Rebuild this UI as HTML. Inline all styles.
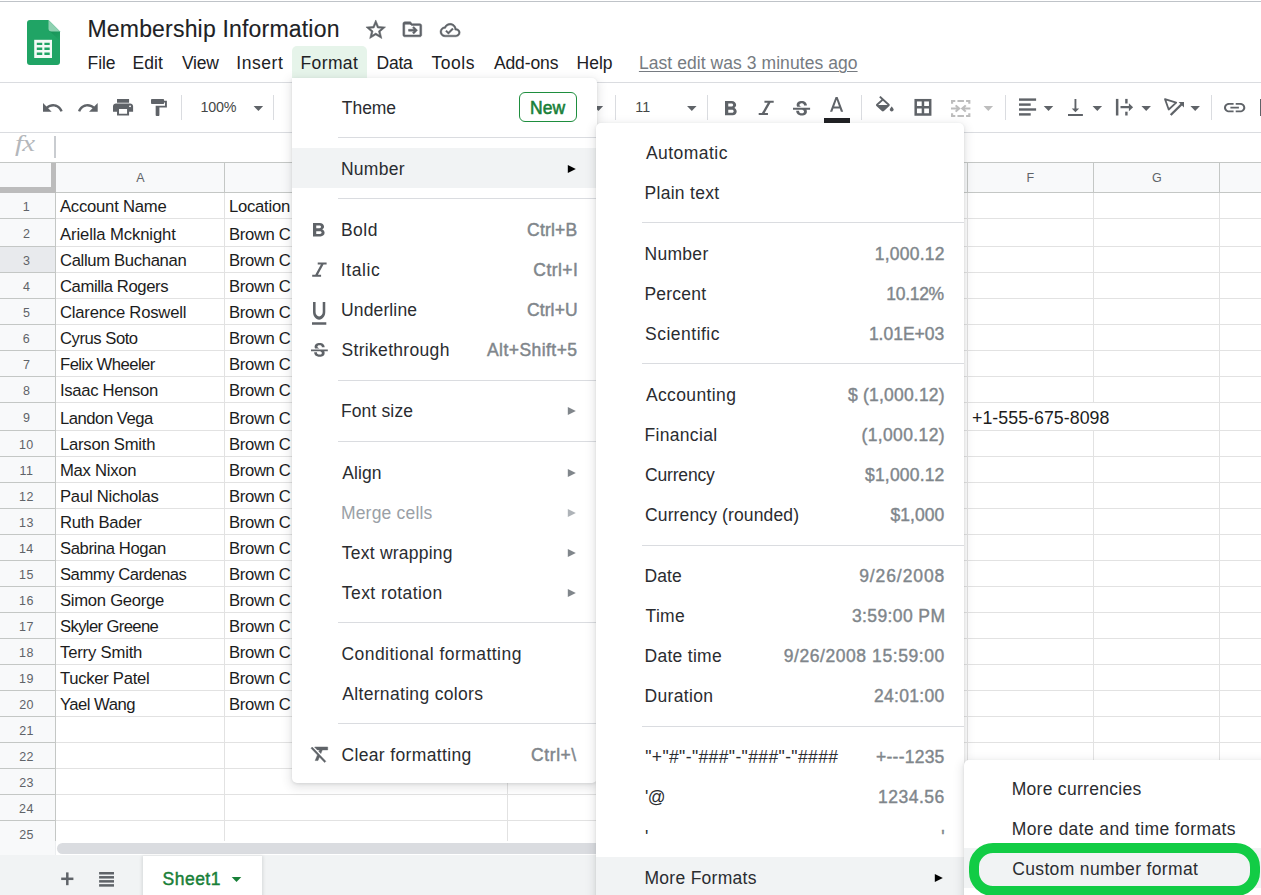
<!DOCTYPE html>
<html lang="en"><head><meta charset="utf-8"><title>Membership Information - Google Sheets</title>
<style>
html,body{margin:0;padding:0}
body{width:1261px;height:895px;overflow:hidden;background:#fff;position:relative;font-family:"Liberation Sans",sans-serif;color:#202124}
.abs,.t,.ic,.ln{position:absolute}
.t{white-space:nowrap;line-height:24px;height:24px}
.ic{display:block;overflow:visible}
.ln{background:#e2e2e2}
.menu{position:absolute;background:#fff;border-radius:5px;box-shadow:0 3px 10px 2px rgba(60,64,67,.13),0 1px 3px rgba(60,64,67,.12)}
.hl{position:absolute;background:#f1f3f4}
.sep{position:absolute;height:1px;background:#dadce0}
</style></head><body>

<header class="titlebar">
<div class="abs" style="left:0;top:1px;width:1261px;height:1px;background:#bfc3c8"></div>
<svg class="ic" style="left:27px;top:19.800px;width:33px;height:45px" viewBox="0 0 33 45">
<defs><linearGradient id="fs" x1="0" y1="0" x2="1" y2="1"><stop offset="0" stop-color="#0c6b3d" stop-opacity=".35"/><stop offset="1" stop-color="#0c6b3d" stop-opacity="0"/></linearGradient></defs>
<path fill="#20a465" d="M3 0h18.500L33 11.500V42a3 3 0 0 1-3 3H3a3 3 0 0 1-3-3V3a3 3 0 0 1 3-3z"/>
<path fill="url(#fs)" d="M22 10.500L33 11.500V21z"/>
<path fill="#8ed1b1" d="M21.500 0L33 11.500H24.500a3 3 0 0 1-3-3z"/>
<path fill="#f4faf6" d="M7.200 19.800H25V38H7.200z"/>
<path fill="#20a465" d="M9.800 22.700h5.450v2.350H9.800zM17.400 22.700h5.300v2.350h-5.300zM9.800 27.600h5.450V30H9.800zM17.400 27.600h5.300V30h-5.300zM9.800 32.500h5.450V35H9.800zM17.400 32.500h5.300V35h-5.300z"/>
</svg>
<div class="t " style="left:87.46px;top:17.00px;font-size:23px;letter-spacing:0.190px;color:#202124;-webkit-text-stroke:.12px #202124;">Membership Information</div>
<svg class="ic" style="left:363.55px;top:17.95px;width:23.5px;height:23.5px" viewBox="0 0 24 24"><path fill="#5f6368" stroke="#5f6368" stroke-width="0.55" stroke-linejoin="round" d="M22 9.240l-7.190-.620L12 2 9.190 8.630 2 9.240l5.460 4.730L5.820 21 12 17.270 18.180 21l-1.630-7.030L22 9.240zM12 15.400l-3.760 2.270 1-4.280-3.320-2.880 4.380-.380L12 6.100l1.710 4.040 4.380.380-3.320 2.880 1 4.280L12 15.400z"/></svg>
<svg class="ic" style="left:401.40px;top:18.20px;width:22.6px;height:22.6px" viewBox="0 0 24 24"><path fill="#5f6368" stroke="#5f6368" stroke-width="0.5" stroke-linejoin="round" d="M20 6h-8l-2-2H4c-1.100 0-2 .900-2 2v12c0 1.100.900 2 2 2h16c1.100 0 2-.900 2-2V8c0-1.100-.900-2-2-2zm0 12H4V6h5.170l2 2H20v10zm-7.840-2.410L13.580 17l4-4-4-4-1.410 1.410L13.750 12H8v2h5.750l-1.590 1.590z"/><path fill="#5f6368" d="M3 5h6.600l1.600 1.800H3z"/></svg>
<svg class="ic" style="left:440.10px;top:20.10px;width:20.2px;height:20.2px" viewBox="0 0 24 24"><path fill="#5f6368" stroke="#5f6368" stroke-width="0.5" stroke-linejoin="round" d="M19.350 10.040C18.670 6.590 15.640 4 12 4 9.110 4 6.600 5.640 5.350 8.040 2.340 8.360 0 10.910 0 14c0 3.310 2.690 6 6 6h13c2.760 0 5-2.240 5-5 0-2.640-2.050-4.780-4.650-4.960zM19 18H6c-2.210 0-4-1.790-4-4 0-2.050 1.530-3.760 3.560-3.970l1.070-.110.500-.950C8.080 7.140 9.940 6 12 6c2.620 0 4.880 1.860 5.390 4.430l.300 1.500 1.530.110c1.560.100 2.780 1.410 2.780 2.960 0 1.650-1.350 3-3 3zm-9-3.820l-2.090-2.090L6.500 13.500 10 17l6.010-6.010-1.410-1.410z"/></svg>
</header>
<nav class="menubar" role="menubar">
<div class="abs" style="left:292px;top:46px;width:75px;height:36px;background:#e6f4ea;border-radius:5px 5px 0 0"></div>
<div class="t " style="left:87.50px;top:51.00px;font-size:17.5px;letter-spacing:-0.058px;color:#202124;">File</div>
<div class="t " style="left:132.50px;top:51.00px;font-size:17.5px;letter-spacing:0.067px;color:#202124;">Edit</div>
<div class="t " style="left:181.90px;top:51.00px;font-size:17.5px;letter-spacing:-0.242px;color:#202124;">View</div>
<div class="t " style="left:236.33px;top:51.00px;font-size:17.5px;letter-spacing:0.545px;color:#202124;">Insert</div>
<div class="t " style="left:300.50px;top:51.00px;font-size:17.5px;letter-spacing:0.383px;color:#202124;">Format</div>
<div class="t " style="left:376.50px;top:51.00px;font-size:17.5px;letter-spacing:-0.237px;color:#202124;">Data</div>
<div class="t " style="left:431.55px;top:51.00px;font-size:17.5px;letter-spacing:0.500px;color:#202124;">Tools</div>
<div class="t " style="left:493.90px;top:51.00px;font-size:17.5px;letter-spacing:-0.113px;color:#202124;">Add-ons</div>
<div class="t " style="left:576.50px;top:51.00px;font-size:17.5px;letter-spacing:0.012px;color:#202124;">Help</div>
<div class="t " style="left:638.90px;top:51.00px;font-size:17.5px;letter-spacing:0.065px;color:#767b81;text-decoration:underline;text-underline-offset:2px;text-decoration-thickness:1px;">Last edit was 3 minutes ago</div>
<div class="abs" style="left:0;top:82px;width:1261px;height:1px;background:#dadce0"></div>
</nav>
<div class="toolbar" role="toolbar">
<svg class="ic" style="left:43.05px;top:103.25px;width:19.70px;height:8.70px" viewBox="2.00 7.00 20.47 9.00" preserveAspectRatio="none"><path fill="#5f6368" d="M12.5 8c-2.65 0-5.05.99-6.9 2.6L2 7v9h9l-3.62-3.62c1.39-1.16 3.16-1.88 5.12-1.88 3.54 0 6.55 2.31 7.6 5.5l2.37-.78C21.08 11.03 17.15 8 12.5 8z"/></svg>
<svg class="ic" style="left:78.05px;top:103.25px;width:19.70px;height:8.70px" viewBox="1.54 7.00 20.46 9.00" preserveAspectRatio="none"><path fill="#5f6368" d="M18.4 10.6C16.55 8.99 14.15 8 11.5 8c-4.65 0-8.58 3.03-9.96 7.22L3.9 16c1.05-3.19 4.05-5.5 7.6-5.5 1.95 0 3.73.72 5.12 1.88L13 16h9V7l-3.6 3.6z"/></svg>
<svg class="ic" style="left:113.15px;top:99.25px;width:20.10px;height:16.50px" viewBox="2.00 3.00 20.00 18.00" preserveAspectRatio="none"><path fill="#5f6368" d="M19 8H5c-1.66 0-3 1.34-3 3v6h4v4h12v-4h4v-6c0-1.66-1.34-3-3-3zm-3 11H8v-5h8v5zm3-7c-.55 0-1-.45-1-1s.45-1 1-1 1 .45 1 1-.45 1-1 1zm-1-9H6v4h12V3z"/></svg>
<svg class="ic" style="left:150.85px;top:99.25px;width:15.90px;height:17.00px" viewBox="4.00 2.00 17.00 20.00" preserveAspectRatio="none"><path fill="#5f6368" d="M18 4V3c0-.55-.45-1-1-1H5c-.55 0-1 .45-1 1v4c0 .55.45 1 1 1h12c.55 0 1-.45 1-1V6h1v4H9v11c0 .55.45 1 1 1h2c.55 0 1-.45 1-1v-9h8V4h-3z"/></svg>
<div class="abs" style="left:181px;top:95px;width:1px;height:25px;background:#dadce0"></div>
<div class="abs" style="left:273px;top:95px;width:1px;height:25px;background:#dadce0"></div>
<div class="t " style="left:200.43px;top:95.00px;font-size:14.3px;letter-spacing:-0.178px;color:#444746;">100%</div>
<svg class="ic" style="left:0;top:0;width:1261px;height:895px" viewBox="0 0 1261 895"><path fill="#5f6368" d="M253.65 106.10H263.15L258.40 111.10z"/></svg>
<svg class="ic" style="left:0;top:0;width:1261px;height:895px" viewBox="0 0 1261 895"><path fill="#5f6368" d="M593.65 106.10H603.15L598.40 111.10z"/></svg>
<div class="abs" style="left:615px;top:95px;width:1px;height:25px;background:#dadce0"></div>
<div class="t " style="left:635.23px;top:95.00px;font-size:14.3px;letter-spacing:0.216px;color:#444746;">11</div>
<svg class="ic" style="left:0;top:0;width:1261px;height:895px" viewBox="0 0 1261 895"><path fill="#5f6368" d="M687.05 106.10H696.55L691.80 111.10z"/></svg>
<div class="abs" style="left:707px;top:95px;width:1px;height:25px;background:#dadce0"></div>
<svg class="ic" style="left:725.05px;top:101.25px;width:11.70px;height:14.30px" viewBox="7.00 4.00 10.75 14.00" preserveAspectRatio="none"><path fill="#5f6368" d="M15.6 10.79c.97-.67 1.65-1.77 1.65-2.79 0-2.26-1.75-4-4-4H7v14h7.04c2.09 0 3.71-1.7 3.71-3.79 0-1.52-.86-2.82-2.15-3.42zM10 6.5h3c.83 0 1.5.67 1.5 1.5s-.67 1.5-1.5 1.5h-3v-3zm3.5 9H10v-3h3.5c.83 0 1.5.67 1.5 1.5s-.67 1.5-1.5 1.5z"/></svg>
<svg class="ic" style="left:0;top:0;width:1261px;height:895px" viewBox="0 0 1261 895"><path fill="#5f6368" d="M764.45 100.70L773.70 100.70L773.70 102.65L770.49 102.65L764.64 113.05L767.95 113.05L767.95 115.00L758.70 115.00L758.70 113.05L761.91 113.05L767.76 102.65L764.45 102.65z"/></svg>
<svg class="ic" style="left:792.65px;top:100.75px;width:17.10px;height:14.60px" viewBox="3.00 3.00 18.00 15.01" preserveAspectRatio="none"><path fill="#5f6368" d="M7.24 8.75c-.26-.48-.39-1.03-.39-1.67 0-.61.13-1.16.4-1.67.26-.5.63-.93 1.11-1.29.48-.35 1.05-.63 1.7-.83.66-.19 1.39-.29 2.18-.29.81 0 1.54.11 2.21.34.66.22 1.23.54 1.69.94.47.4.83.88 1.08 1.43.25.55.38 1.15.38 1.81h-3.01c0-.31-.05-.59-.15-.85-.09-.27-.24-.49-.44-.68-.2-.19-.45-.33-.75-.44-.3-.1-.66-.16-1.06-.16-.39 0-.74.04-1.03.13-.29.09-.53.21-.72.36-.19.16-.34.34-.44.55-.1.21-.15.43-.15.66 0 .48.25.88.74 1.21.38.25.77.48 1.41.7H7.39c-.05-.08-.11-.17-.15-.25zM21 12v-2H3v2h9.62c.18.07.4.14.55.2.37.17.66.34.87.51.21.17.35.36.43.57.07.2.11.43.11.69 0 .23-.05.45-.14.66-.09.2-.23.38-.42.53-.19.15-.42.26-.71.35-.29.08-.63.13-1.01.13-.43 0-.83-.04-1.18-.13s-.66-.23-.91-.42c-.25-.19-.45-.44-.59-.75-.14-.31-.25-.76-.25-1.21H6.4c0 .55.08 1.13.24 1.58.16.45.37.85.65 1.21.28.35.6.66.98.92.37.26.78.48 1.22.65.44.17.9.3 1.38.39.48.08.96.13 1.44.13.8 0 1.53-.09 2.18-.28s1.21-.45 1.67-.79c.46-.34.82-.77 1.07-1.27s.38-1.07.38-1.71c0-.6-.1-1.14-.31-1.61-.05-.11-.11-.23-.17-.33H21z"/></svg>
<svg class="ic" style="left:830.15px;top:97.35px;width:13.20px;height:14.70px" viewBox="5.50 3.00 12.99 14.00" preserveAspectRatio="none"><path fill="#5f6368" d="M11 3L5.5 17h2.25l1.12-3h6.25l1.12 3h2.25L13 3h-2zm-1.38 9L12 5.67 14.38 12H9.62z"/></svg>
<div class="abs" style="left:824px;top:118px;width:26px;height:5px;background:#202124"></div>
<div class="abs" style="left:861px;top:95px;width:1px;height:25px;background:#dadce0"></div>
<svg class="ic" style="left:876.35px;top:96.25px;width:17.70px;height:15.40px" viewBox="3.00 0.00 18.00 17.00" preserveAspectRatio="none"><path fill="#5f6368" d="M16.56 8.94L7.62 0 6.21 1.41l2.38 2.38-5.15 5.15c-.59.59-.59 1.54 0 2.12l5.5 5.5c.29.29.68.44 1.06.44s.77-.15 1.06-.44l5.5-5.5c.59-.58.59-1.53 0-2.12zM5.21 10L10 5.21 14.79 10H5.21zM19 11.5s-2 2.17-2 3.5c0 1.1.9 2 2 2s2-.9 2-2c0-1.33-2-3.5-2-3.5z"/></svg>
<svg class="ic" style="left:0;top:0;width:1261px;height:895px" viewBox="0 0 1261 895"><g fill="none" stroke="#5f6368" stroke-width="2.500"><rect x="915.700" y="100.200" width="14.500" height="14.300"/><path d="M922.950 100.200V114.500M915.700 107.350H930.200"/></g></svg>
<svg class="ic" style="left:951.35px;top:99.75px;width:19.40px;height:17.00px" viewBox="3.00 3.00 18.00 18.00" preserveAspectRatio="none"><path fill="#bdbdbd" d="M3 3h4v2H5v2H3V3zm6 0h6v2H9V3zm8 0h4v4h-2V5h-2V3zM3 17h2v2h2v2H3v-4zm6 2h6v2H9v-2zm10-2h2v4h-4v-2h2v-2zM3 11h5.2L6.6 9.4 8 8l4 4-4 4-1.4-1.4L8.2 13H3v-2zm18 2h-5.2l1.6 1.6L16 16l-4-4 4-4 1.4 1.4-1.6 1.6H21v2z"/></svg>
<svg class="ic" style="left:0;top:0;width:1261px;height:895px" viewBox="0 0 1261 895"><path fill="#bdbdbd" d="M983.55 106.10H993.05L988.30 111.10z"/></svg>
<div class="abs" style="left:1005px;top:95px;width:1px;height:25px;background:#dadce0"></div>
<svg class="ic" style="left:0;top:0;width:1261px;height:895px" viewBox="0 0 1261 895"><g fill="#5f6368"><rect x="1019" y="98.400" width="17.100" height="2.400"/><rect x="1019" y="103.400" width="11.700" height="2.400"/><rect x="1019" y="108.300" width="17.100" height="2.400"/><rect x="1019" y="113.200" width="11.700" height="2.400"/></g></svg>
<svg class="ic" style="left:0;top:0;width:1261px;height:895px" viewBox="0 0 1261 895"><path fill="#5f6368" d="M1043.75 106.10H1053.25L1048.50 111.10z"/></svg>
<svg class="ic" style="left:1068.35px;top:98.95px;width:14.90px;height:17.00px" viewBox="4.00 3.00 16.00 18.00" preserveAspectRatio="none"><path fill="#5f6368" d="M16 13h-3V3h-2v10H8l4 4 4-4zM4 19v2h16v-2H4z"/></svg>
<svg class="ic" style="left:0;top:0;width:1261px;height:895px" viewBox="0 0 1261 895"><path fill="#5f6368" d="M1092.55 106.10H1102.05L1097.30 111.10z"/></svg>
<svg class="ic" style="left:0;top:0;width:1261px;height:895px" viewBox="0 0 1261 895"><g fill="#5f6368" transform="translate(1115.9 98.9)"><rect x="0" y="0" width="2.500" height="16.600"/><rect x="9.300" y="0" width="2.400" height="4.600"/><rect x="9.300" y="12.800" width="2.400" height="3.800"/><path d="M4.600 7.200H13V4.300L17.200 8.300L13 12.300V9.400H4.600z"/></g></svg>
<svg class="ic" style="left:0;top:0;width:1261px;height:895px" viewBox="0 0 1261 895"><path fill="#5f6368" d="M1141.45 106.10H1150.95L1146.20 111.10z"/></svg>
<svg class="ic" style="left:0;top:0;width:1261px;height:895px" viewBox="0 0 1261 895"><g fill="none" stroke="#5f6368"><path d="M1165 99.100L1176.200 102.700L1168.700 109.500z" stroke-width="1.800" stroke-linejoin="round"/><path d="M1170.700 115L1182.400 103.500" stroke-width="2.400"/><path d="M1178.600 102.100H1184V107.400z" fill="#5f6368" stroke="none"/></g></svg>
<svg class="ic" style="left:0;top:0;width:1261px;height:895px" viewBox="0 0 1261 895"><path fill="#5f6368" d="M1190.45 106.10H1199.95L1195.20 111.10z"/></svg>
<div class="abs" style="left:1211px;top:95px;width:1px;height:25px;background:#dadce0"></div>
<svg class="ic" style="left:1224.25px;top:102.95px;width:21.30px;height:9.30px" viewBox="2.00 7.00 20.00 10.00" preserveAspectRatio="none"><path fill="#5f6368" d="M3.9 12c0-1.71 1.390-3.100 3.100-3.100h4V7H7c-2.760 0-5 2.240-5 5s2.240 5 5 5h4v-1.900H7c-1.710 0-3.100-1.390-3.100-3.100zM8 13h8v-2H8v2zm9-6h-4v1.900h4c1.710 0 3.100 1.390 3.100 3.100s-1.390 3.100-3.100 3.100h-4V17h4c2.760 0 5-2.240 5-5s-2.240-5-5-5z"/></svg>
<div class="abs" style="left:1259.500px;top:99px;width:2px;height:16.500px;background:#5f6368"></div>
<div class="abs" style="left:0;top:132px;width:1261px;height:1px;background:#dadce0"></div>
</div>
<div class="formula-bar">
<div class="t" style="left:14.500px;top:129.500px;font-family:'Liberation Serif',serif;font-style:italic;font-size:22.500px;color:#b4b7bb;letter-spacing:-0.500px;line-height:28px;height:28px;transform:scaleX(1.28);transform-origin:0 0">fx</div>
<div class="abs" style="left:54px;top:136px;width:1.500px;height:22px;background:#c9ccd0"></div>
<div class="abs" style="left:0;top:162px;width:1261px;height:1px;background:#c4c7c5"></div>
</div>
<main class="grid">
<div class="abs" style="left:0;top:163px;width:1261px;height:29px;background:#f8f9fa"></div>
<div class="abs" style="left:0;top:192px;width:55px;height:663px;background:#f8f9fa"></div>
<div class="abs" style="left:0;top:247.0px;width:55px;height:25.0px;background:#e8eaed"></div>
<div class="ln" style="left:55px;top:192px;width:1206px;height:1px"></div>
<div class="ln" style="left:0;top:192px;width:55px;height:1px;background:#c4c7c5"></div>
<div class="ln" style="left:55px;top:218px;width:1206px;height:1px"></div>
<div class="ln" style="left:0;top:218px;width:55px;height:1px;background:#c4c7c5"></div>
<div class="ln" style="left:55px;top:246px;width:1206px;height:1px"></div>
<div class="ln" style="left:0;top:246px;width:55px;height:1px;background:#c4c7c5"></div>
<div class="ln" style="left:55px;top:272px;width:1206px;height:1px"></div>
<div class="ln" style="left:0;top:272px;width:55px;height:1px;background:#c4c7c5"></div>
<div class="ln" style="left:55px;top:298px;width:1206px;height:1px"></div>
<div class="ln" style="left:0;top:298px;width:55px;height:1px;background:#c4c7c5"></div>
<div class="ln" style="left:55px;top:324px;width:1206px;height:1px"></div>
<div class="ln" style="left:0;top:324px;width:55px;height:1px;background:#c4c7c5"></div>
<div class="ln" style="left:55px;top:350px;width:1206px;height:1px"></div>
<div class="ln" style="left:0;top:350px;width:55px;height:1px;background:#c4c7c5"></div>
<div class="ln" style="left:55px;top:376px;width:1206px;height:1px"></div>
<div class="ln" style="left:0;top:376px;width:55px;height:1px;background:#c4c7c5"></div>
<div class="ln" style="left:55px;top:402px;width:1206px;height:1px"></div>
<div class="ln" style="left:0;top:402px;width:55px;height:1px;background:#c4c7c5"></div>
<div class="ln" style="left:55px;top:430px;width:1206px;height:1px"></div>
<div class="ln" style="left:0;top:430px;width:55px;height:1px;background:#c4c7c5"></div>
<div class="ln" style="left:55px;top:456px;width:1206px;height:1px"></div>
<div class="ln" style="left:0;top:456px;width:55px;height:1px;background:#c4c7c5"></div>
<div class="ln" style="left:55px;top:482px;width:1206px;height:1px"></div>
<div class="ln" style="left:0;top:482px;width:55px;height:1px;background:#c4c7c5"></div>
<div class="ln" style="left:55px;top:508px;width:1206px;height:1px"></div>
<div class="ln" style="left:0;top:508px;width:55px;height:1px;background:#c4c7c5"></div>
<div class="ln" style="left:55px;top:534px;width:1206px;height:1px"></div>
<div class="ln" style="left:0;top:534px;width:55px;height:1px;background:#c4c7c5"></div>
<div class="ln" style="left:55px;top:560px;width:1206px;height:1px"></div>
<div class="ln" style="left:0;top:560px;width:55px;height:1px;background:#c4c7c5"></div>
<div class="ln" style="left:55px;top:586px;width:1206px;height:1px"></div>
<div class="ln" style="left:0;top:586px;width:55px;height:1px;background:#c4c7c5"></div>
<div class="ln" style="left:55px;top:612px;width:1206px;height:1px"></div>
<div class="ln" style="left:0;top:612px;width:55px;height:1px;background:#c4c7c5"></div>
<div class="ln" style="left:55px;top:638px;width:1206px;height:1px"></div>
<div class="ln" style="left:0;top:638px;width:55px;height:1px;background:#c4c7c5"></div>
<div class="ln" style="left:55px;top:664px;width:1206px;height:1px"></div>
<div class="ln" style="left:0;top:664px;width:55px;height:1px;background:#c4c7c5"></div>
<div class="ln" style="left:55px;top:690px;width:1206px;height:1px"></div>
<div class="ln" style="left:0;top:690px;width:55px;height:1px;background:#c4c7c5"></div>
<div class="ln" style="left:55px;top:716px;width:1206px;height:1px"></div>
<div class="ln" style="left:0;top:716px;width:55px;height:1px;background:#c4c7c5"></div>
<div class="ln" style="left:55px;top:742px;width:1206px;height:1px"></div>
<div class="ln" style="left:0;top:742px;width:55px;height:1px;background:#c4c7c5"></div>
<div class="ln" style="left:55px;top:768px;width:1206px;height:1px"></div>
<div class="ln" style="left:0;top:768px;width:55px;height:1px;background:#c4c7c5"></div>
<div class="ln" style="left:55px;top:794px;width:1206px;height:1px"></div>
<div class="ln" style="left:0;top:794px;width:55px;height:1px;background:#c4c7c5"></div>
<div class="ln" style="left:55px;top:820px;width:1206px;height:1px"></div>
<div class="ln" style="left:0;top:820px;width:55px;height:1px;background:#c4c7c5"></div>
<div class="abs" style="left:55px;top:192px;width:1206px;height:1px;background:#c4c7c5"></div>
<div class="ln" style="left:224px;top:193px;width:1px;height:648px"></div>
<div class="abs" style="left:224px;top:163px;width:1px;height:30px;background:#c4c7c5"></div>
<div class="ln" style="left:507px;top:193px;width:1px;height:648px"></div>
<div class="abs" style="left:507px;top:163px;width:1px;height:30px;background:#c4c7c5"></div>
<div class="ln" style="left:715px;top:193px;width:1px;height:648px"></div>
<div class="abs" style="left:715px;top:163px;width:1px;height:30px;background:#c4c7c5"></div>
<div class="ln" style="left:841px;top:193px;width:1px;height:648px"></div>
<div class="abs" style="left:841px;top:163px;width:1px;height:30px;background:#c4c7c5"></div>
<div class="ln" style="left:967px;top:193px;width:1px;height:648px"></div>
<div class="abs" style="left:967px;top:163px;width:1px;height:30px;background:#c4c7c5"></div>
<div class="ln" style="left:1093px;top:193px;width:1px;height:648px"></div>
<div class="abs" style="left:1093px;top:163px;width:1px;height:30px;background:#c4c7c5"></div>
<div class="ln" style="left:1219px;top:193px;width:1px;height:648px"></div>
<div class="abs" style="left:1219px;top:163px;width:1px;height:30px;background:#c4c7c5"></div>
<div class="abs" style="left:55px;top:193px;width:1px;height:648px;background:#c4c7c5"></div>
<div class="abs" style="left:55px;top:841px;width:1px;height:14px;background:#eceef0"></div>
<div class="abs" style="left:1090px;top:403px;width:5px;height:27px;background:#fff"></div>
<div class="abs" style="left:51px;top:163px;width:4.500px;height:30px;background:#bcbcbc"></div>
<div class="abs" style="left:0;top:187px;width:55px;height:5.500px;background:#bcbcbc"></div>
<div class="t " style="left:136.24px;top:166.00px;font-size:12.5px;letter-spacing:0.000px;color:#5f6368;">A</div>
<div class="t " style="left:1026.51px;top:166.00px;font-size:12.5px;letter-spacing:0.000px;color:#5f6368;">F</div>
<div class="t " style="left:1151.88px;top:166.00px;font-size:12.5px;letter-spacing:0.000px;color:#5f6368;">G</div>
<div class="t " style="left:22.74px;top:195.00px;font-size:12.5px;letter-spacing:0.000px;color:#5f6368;">1</div>
<div class="t " style="left:22.90px;top:222.00px;font-size:12.5px;letter-spacing:0.000px;color:#5f6368;">2</div>
<div class="t " style="left:22.96px;top:249.00px;font-size:12.5px;letter-spacing:0.000px;color:#5f6368;">3</div>
<div class="t " style="left:22.96px;top:275.00px;font-size:12.5px;letter-spacing:0.000px;color:#5f6368;">4</div>
<div class="t " style="left:22.93px;top:301.00px;font-size:12.5px;letter-spacing:0.000px;color:#5f6368;">5</div>
<div class="t " style="left:22.87px;top:327.00px;font-size:12.5px;letter-spacing:0.000px;color:#5f6368;">6</div>
<div class="t " style="left:22.90px;top:353.00px;font-size:12.5px;letter-spacing:0.000px;color:#5f6368;">7</div>
<div class="t " style="left:22.93px;top:379.00px;font-size:12.5px;letter-spacing:0.000px;color:#5f6368;">8</div>
<div class="t " style="left:22.93px;top:406.00px;font-size:12.5px;letter-spacing:0.000px;color:#5f6368;">9</div>
<div class="t " style="left:19.01px;top:433.00px;font-size:12.5px;letter-spacing:0.400px;color:#5f6368;">10</div>
<div class="t " style="left:19.54px;top:459.00px;font-size:12.5px;letter-spacing:0.400px;color:#5f6368;">11</div>
<div class="t " style="left:19.07px;top:485.00px;font-size:12.5px;letter-spacing:0.400px;color:#5f6368;">12</div>
<div class="t " style="left:19.04px;top:511.00px;font-size:12.5px;letter-spacing:0.400px;color:#5f6368;">13</div>
<div class="t " style="left:18.95px;top:537.00px;font-size:12.5px;letter-spacing:0.400px;color:#5f6368;">14</div>
<div class="t " style="left:19.04px;top:563.00px;font-size:12.5px;letter-spacing:0.400px;color:#5f6368;">15</div>
<div class="t " style="left:19.04px;top:589.00px;font-size:12.5px;letter-spacing:0.400px;color:#5f6368;">16</div>
<div class="t " style="left:19.07px;top:615.00px;font-size:12.5px;letter-spacing:0.400px;color:#5f6368;">17</div>
<div class="t " style="left:19.04px;top:641.00px;font-size:12.5px;letter-spacing:0.400px;color:#5f6368;">18</div>
<div class="t " style="left:19.07px;top:667.00px;font-size:12.5px;letter-spacing:0.400px;color:#5f6368;">19</div>
<div class="t " style="left:19.17px;top:693.00px;font-size:12.5px;letter-spacing:0.400px;color:#5f6368;">20</div>
<div class="t " style="left:19.23px;top:719.00px;font-size:12.5px;letter-spacing:0.400px;color:#5f6368;">21</div>
<div class="t " style="left:19.23px;top:745.00px;font-size:12.5px;letter-spacing:0.400px;color:#5f6368;">22</div>
<div class="t " style="left:19.20px;top:771.00px;font-size:12.5px;letter-spacing:0.400px;color:#5f6368;">23</div>
<div class="t " style="left:19.11px;top:797.00px;font-size:12.5px;letter-spacing:0.400px;color:#5f6368;">24</div>
<div class="t " style="left:19.20px;top:823.00px;font-size:12.5px;letter-spacing:0.400px;color:#5f6368;">25</div>
<div class="t " style="left:60.00px;top:195.00px;font-size:16.67px;letter-spacing:-0.235px;color:#1c1c1c;">Account Name</div>
<div class="t " style="left:229.00px;top:195.00px;font-size:16.67px;letter-spacing:-0.259px;color:#1c1c1c;">Location</div>
<div class="t " style="left:60.00px;top:223.00px;font-size:16.67px;letter-spacing:-0.114px;color:#1c1c1c;">Ariella Mcknight</div>
<div class="t " style="left:229.00px;top:223.00px;font-size:16.67px;letter-spacing:-0.344px;color:#1c1c1c;">Brown C</div>
<div class="t " style="left:60.00px;top:249.00px;font-size:16.67px;letter-spacing:-0.344px;color:#1c1c1c;">Callum Buchanan</div>
<div class="t " style="left:229.00px;top:249.00px;font-size:16.67px;letter-spacing:-0.344px;color:#1c1c1c;">Brown C</div>
<div class="t " style="left:60.00px;top:275.00px;font-size:16.67px;letter-spacing:-0.412px;color:#1c1c1c;">Camilla Rogers</div>
<div class="t " style="left:229.00px;top:275.00px;font-size:16.67px;letter-spacing:-0.344px;color:#1c1c1c;">Brown C</div>
<div class="t " style="left:60.00px;top:301.00px;font-size:16.67px;letter-spacing:-0.213px;color:#1c1c1c;">Clarence Roswell</div>
<div class="t " style="left:229.00px;top:301.00px;font-size:16.67px;letter-spacing:-0.344px;color:#1c1c1c;">Brown C</div>
<div class="t " style="left:60.00px;top:327.00px;font-size:16.67px;letter-spacing:-0.474px;color:#1c1c1c;">Cyrus Soto</div>
<div class="t " style="left:229.00px;top:327.00px;font-size:16.67px;letter-spacing:-0.344px;color:#1c1c1c;">Brown C</div>
<div class="t " style="left:60.00px;top:353.00px;font-size:16.67px;letter-spacing:-0.541px;color:#1c1c1c;">Felix Wheeler</div>
<div class="t " style="left:229.00px;top:353.00px;font-size:16.67px;letter-spacing:-0.344px;color:#1c1c1c;">Brown C</div>
<div class="t " style="left:60.00px;top:379.00px;font-size:16.67px;letter-spacing:-0.322px;color:#1c1c1c;">Isaac Henson</div>
<div class="t " style="left:229.00px;top:379.00px;font-size:16.67px;letter-spacing:-0.344px;color:#1c1c1c;">Brown C</div>
<div class="t " style="left:60.00px;top:407.00px;font-size:16.67px;letter-spacing:-0.485px;color:#1c1c1c;">Landon Vega</div>
<div class="t " style="left:229.00px;top:407.00px;font-size:16.67px;letter-spacing:-0.344px;color:#1c1c1c;">Brown C</div>
<div class="t " style="left:60.00px;top:433.00px;font-size:16.67px;letter-spacing:-0.244px;color:#1c1c1c;">Larson Smith</div>
<div class="t " style="left:229.00px;top:433.00px;font-size:16.67px;letter-spacing:-0.344px;color:#1c1c1c;">Brown C</div>
<div class="t " style="left:60.00px;top:459.00px;font-size:16.67px;letter-spacing:-0.271px;color:#1c1c1c;">Max Nixon</div>
<div class="t " style="left:229.00px;top:459.00px;font-size:16.67px;letter-spacing:-0.344px;color:#1c1c1c;">Brown C</div>
<div class="t " style="left:60.00px;top:485.00px;font-size:16.67px;letter-spacing:-0.246px;color:#1c1c1c;">Paul Nicholas</div>
<div class="t " style="left:229.00px;top:485.00px;font-size:16.67px;letter-spacing:-0.344px;color:#1c1c1c;">Brown C</div>
<div class="t " style="left:60.00px;top:511.00px;font-size:16.67px;letter-spacing:-0.267px;color:#1c1c1c;">Ruth Bader</div>
<div class="t " style="left:229.00px;top:511.00px;font-size:16.67px;letter-spacing:-0.344px;color:#1c1c1c;">Brown C</div>
<div class="t " style="left:60.00px;top:537.00px;font-size:16.67px;letter-spacing:-0.399px;color:#1c1c1c;">Sabrina Hogan</div>
<div class="t " style="left:229.00px;top:537.00px;font-size:16.67px;letter-spacing:-0.344px;color:#1c1c1c;">Brown C</div>
<div class="t " style="left:60.00px;top:563.00px;font-size:16.67px;letter-spacing:-0.489px;color:#1c1c1c;">Sammy Cardenas</div>
<div class="t " style="left:229.00px;top:563.00px;font-size:16.67px;letter-spacing:-0.344px;color:#1c1c1c;">Brown C</div>
<div class="t " style="left:60.00px;top:589.00px;font-size:16.67px;letter-spacing:-0.279px;color:#1c1c1c;">Simon George</div>
<div class="t " style="left:229.00px;top:589.00px;font-size:16.67px;letter-spacing:-0.344px;color:#1c1c1c;">Brown C</div>
<div class="t " style="left:60.00px;top:615.00px;font-size:16.67px;letter-spacing:-0.638px;color:#1c1c1c;">Skyler Greene</div>
<div class="t " style="left:229.00px;top:615.00px;font-size:16.67px;letter-spacing:-0.344px;color:#1c1c1c;">Brown C</div>
<div class="t " style="left:60.00px;top:641.00px;font-size:16.67px;letter-spacing:-0.187px;color:#1c1c1c;">Terry Smith</div>
<div class="t " style="left:229.00px;top:641.00px;font-size:16.67px;letter-spacing:-0.344px;color:#1c1c1c;">Brown C</div>
<div class="t " style="left:60.00px;top:667.00px;font-size:16.67px;letter-spacing:-0.294px;color:#1c1c1c;">Tucker Patel</div>
<div class="t " style="left:229.00px;top:667.00px;font-size:16.67px;letter-spacing:-0.344px;color:#1c1c1c;">Brown C</div>
<div class="t " style="left:60.00px;top:693.00px;font-size:16.67px;letter-spacing:-0.523px;color:#1c1c1c;">Yael Wang</div>
<div class="t " style="left:229.00px;top:693.00px;font-size:16.67px;letter-spacing:-0.344px;color:#1c1c1c;">Brown C</div>
<div class="t " style="left:972.00px;top:406.00px;font-size:17.8px;letter-spacing:0.032px;color:#1c1c1c;">+1-555-675-8098</div>
</main>
<footer class="sheet-tabs">
<div class="abs" style="left:56px;top:841px;width:1205px;height:14px;background:#fff"></div>
<div class="abs" style="left:57px;top:842.900px;width:1230px;height:10.700px;border-radius:6px;background:#dadce0"></div>
<div class="abs" style="left:0;top:855px;width:1261px;height:40px;background:#f1f3f4"></div>
<div class="abs" style="left:143px;top:856px;width:119px;height:40px;background:#fff;box-shadow:0 1px 3px 1px rgba(60,64,67,.15)"></div>
<svg class="ic" style="left:0;top:0;width:1261px;height:895px" viewBox="0 0 1261 895"><g fill="#5f6368"><rect x="61.200" y="877.550" width="12.200" height="2.500"/><rect x="66.050" y="872.400" width="2.500" height="12.800"/><rect x="99.100" y="872" width="14.900" height="2.500"/><rect x="99.100" y="876.050" width="14.900" height="2.500"/><rect x="99.100" y="880.100" width="14.900" height="2.500"/><rect x="99.100" y="884.150" width="14.900" height="2.500"/></g></svg>
<div class="t " style="left:162.61px;top:867.00px;font-size:17.5px;letter-spacing:0.460px;color:#188038;-webkit-text-stroke:.45px #188038;">Sheet1</div>
<svg class="ic" style="left:0;top:0;width:1261px;height:895px" viewBox="0 0 1261 895"><path fill="#188038" d="M231.70 876.90H241.30L236.50 881.90z"/></svg>
</footer>
<div class="format-menu" role="menu">
<div class="menu" style="left:292px;top:78px;width:305px;height:704.500px;border-radius:0 5px 5px 5px"></div>
<div class="hl" style="left:292px;top:147.750px;width:305px;height:40px"></div>
<div class="sep" style="left:338px;top:137px;width:259px"></div>
<div class="sep" style="left:338px;top:198px;width:259px"></div>
<div class="sep" style="left:338px;top:380px;width:259px"></div>
<div class="sep" style="left:338px;top:441px;width:259px"></div>
<div class="sep" style="left:338px;top:622px;width:259px"></div>
<div class="sep" style="left:338px;top:723px;width:259px"></div>
<div class="t " style="left:341.85px;top:96.00px;font-size:17.5px;letter-spacing:-0.069px;color:#2a2c30;">Theme</div>
<div class="t " style="left:340.90px;top:157.00px;font-size:17.5px;letter-spacing:0.272px;color:#2a2c30;">Number</div>
<svg class="ic" style="left:0;top:0;width:1261px;height:895px" viewBox="0 0 1261 895"><path fill="#000" d="M567.80 165.00V173.00L575.80 169.00z"/></svg>
<div class="t " style="left:340.90px;top:218.00px;font-size:17.5px;letter-spacing:0.483px;color:#2a2c30;">Bold</div>
<div class="t " style="left:527.12px;top:218.00px;font-size:17.5px;letter-spacing:0.192px;color:#80868b;-webkit-text-stroke:.45px #80868b;">Ctrl+B</div>
<svg class="ic" style="left:313.15px;top:223.15px;width:11.60px;height:13.40px" viewBox="7.00 4.00 10.75 14.00" preserveAspectRatio="none"><path fill="#5f6368" d="M15.6 10.79c.97-.67 1.65-1.77 1.65-2.79 0-2.26-1.75-4-4-4H7v14h7.04c2.09 0 3.71-1.7 3.71-3.79 0-1.52-.86-2.82-2.15-3.42zM10 6.5h3c.83 0 1.5.67 1.5 1.5s-.67 1.5-1.5 1.5h-3v-3zm3.5 9H10v-3h3.5c.83 0 1.5.67 1.5 1.5s-.67 1.5-1.5 1.5z"/></svg>
<div class="t " style="left:340.73px;top:258.00px;font-size:17.5px;letter-spacing:0.610px;color:#2a2c30;">Italic</div>
<div class="t " style="left:533.33px;top:258.00px;font-size:17.5px;letter-spacing:0.440px;color:#80868b;-webkit-text-stroke:.45px #80868b;">Ctrl+I</div>
<svg class="ic" style="left:0;top:0;width:1261px;height:895px" viewBox="0 0 1261 895"><path fill="#5f6368" d="M317.72 262.50L326.60 262.50L326.60 264.45L323.51 264.45L317.90 274.85L321.08 274.85L321.08 276.80L312.20 276.80L312.20 274.85L315.29 274.85L320.90 264.45L317.72 264.45z"/></svg>
<div class="t " style="left:340.99px;top:298.00px;font-size:17.5px;letter-spacing:0.139px;color:#2a2c30;">Underline</div>
<div class="t " style="left:526.92px;top:298.00px;font-size:17.5px;letter-spacing:0.128px;color:#80868b;-webkit-text-stroke:.45px #80868b;">Ctrl+U</div>
<svg class="ic" style="left:312.25px;top:302.25px;width:14.30px;height:22.70px" viewBox="5.00 3.00 14.00 18.00" preserveAspectRatio="none"><path fill="#5f6368" d="M12 17c3.310 0 6-2.690 6-6V3h-2.500v8c0 1.930-1.570 3.500-3.500 3.500S8.500 12.930 8.500 11V3H6v8c0 3.310 2.690 6 6 6zm-7 2v2h14v-2H5z"/></svg>
<div class="t " style="left:341.51px;top:338.00px;font-size:17.5px;letter-spacing:0.317px;color:#2a2c30;">Strikethrough</div>
<div class="t " style="left:487.00px;top:338.00px;font-size:17.5px;letter-spacing:0.442px;color:#80868b;-webkit-text-stroke:.45px #80868b;">Alt+Shift+5</div>
<svg class="ic" style="left:310.95px;top:343.25px;width:16.80px;height:13.80px" viewBox="3.00 3.00 18.00 15.01" preserveAspectRatio="none"><path fill="#5f6368" d="M7.24 8.75c-.26-.48-.39-1.03-.39-1.67 0-.61.13-1.16.4-1.67.26-.5.63-.93 1.11-1.29.48-.35 1.05-.63 1.7-.83.66-.19 1.39-.29 2.18-.29.81 0 1.54.11 2.21.34.66.22 1.23.54 1.69.94.47.4.83.88 1.08 1.43.25.55.38 1.15.38 1.81h-3.01c0-.31-.05-.59-.15-.85-.09-.27-.24-.49-.44-.68-.2-.19-.45-.33-.75-.44-.3-.1-.66-.16-1.06-.16-.39 0-.74.04-1.03.13-.29.09-.53.21-.72.36-.19.16-.34.34-.44.55-.1.21-.15.43-.15.66 0 .48.25.88.74 1.21.38.25.77.48 1.41.7H7.39c-.05-.08-.11-.17-.15-.25zM21 12v-2H3v2h9.62c.18.07.4.14.55.2.37.17.66.34.87.51.21.17.35.36.43.57.07.2.11.43.11.69 0 .23-.05.45-.14.66-.09.2-.23.38-.42.53-.19.15-.42.26-.71.35-.29.08-.63.13-1.01.13-.43 0-.83-.04-1.18-.13s-.66-.23-.91-.42c-.25-.19-.45-.44-.59-.75-.14-.31-.25-.76-.25-1.21H6.4c0 .55.08 1.13.24 1.58.16.45.37.85.65 1.21.28.35.6.66.98.92.37.26.78.48 1.22.65.44.17.9.3 1.38.39.48.08.96.13 1.44.13.8 0 1.53-.09 2.18-.28s1.21-.45 1.67-.79c.46-.34.82-.77 1.07-1.27s.38-1.07.38-1.71c0-.6-.1-1.14-.31-1.61-.05-.11-.11-.23-.17-.33H21z"/></svg>
<div class="t " style="left:340.90px;top:399.00px;font-size:17.5px;letter-spacing:0.142px;color:#2a2c30;">Font size</div>
<svg class="ic" style="left:0;top:0;width:1261px;height:895px" viewBox="0 0 1261 895"><path fill="#80868b" d="M567.80 407.00V415.00L575.80 411.00z"/></svg>
<div class="t " style="left:342.30px;top:461.00px;font-size:17.5px;letter-spacing:0.078px;color:#2a2c30;">Align</div>
<svg class="ic" style="left:0;top:0;width:1261px;height:895px" viewBox="0 0 1261 895"><path fill="#80868b" d="M567.80 469.00V477.00L575.80 473.00z"/></svg>
<div class="t " style="left:340.90px;top:501.00px;font-size:17.5px;letter-spacing:0.200px;color:#9aa0a6;">Merge cells</div>
<svg class="ic" style="left:0;top:0;width:1261px;height:895px" viewBox="0 0 1261 895"><path fill="#aeb3b8" d="M567.80 509.00V517.00L575.80 513.00z"/></svg>
<div class="t " style="left:341.85px;top:541.00px;font-size:17.5px;letter-spacing:0.227px;color:#2a2c30;">Text wrapping</div>
<svg class="ic" style="left:0;top:0;width:1261px;height:895px" viewBox="0 0 1261 895"><path fill="#80868b" d="M567.80 549.00V557.00L575.80 553.00z"/></svg>
<div class="t " style="left:341.85px;top:581.00px;font-size:17.5px;letter-spacing:0.418px;color:#2a2c30;">Text rotation</div>
<svg class="ic" style="left:0;top:0;width:1261px;height:895px" viewBox="0 0 1261 895"><path fill="#80868b" d="M567.80 589.00V597.00L575.80 593.00z"/></svg>
<div class="t " style="left:341.43px;top:642.00px;font-size:17.5px;letter-spacing:0.464px;color:#2a2c30;">Conditional formatting</div>
<div class="t " style="left:342.30px;top:682.00px;font-size:17.5px;letter-spacing:0.319px;color:#2a2c30;">Alternating colors</div>
<div class="t " style="left:341.43px;top:743.00px;font-size:17.5px;letter-spacing:0.361px;color:#2a2c30;">Clear formatting</div>
<div class="t " style="left:531.12px;top:743.00px;font-size:17.5px;letter-spacing:0.565px;color:#80868b;-webkit-text-stroke:.45px #80868b;">Ctrl+\</div>
<svg class="ic" style="left:311.15px;top:747.35px;width:16.70px;height:15.50px" viewBox="2.00 5.00 18.00 16.00" preserveAspectRatio="none"><path fill="#5f6368" stroke="#5f6368" stroke-width="0.5" d="M3.270 5L2 6.270l6.970 6.970L6.500 19h3l1.570-3.660L16.730 21 18 19.730 3.550 5.270 3.270 5zM6 5v.180L8.820 8h2.400l-.720 1.680 2.100 2.100L14.210 8H20V5H6z"/></svg>
<div class="abs" style="left:519px;top:92px;width:56px;height:28px;border:1.250px solid #1e8e3e;border-radius:6px;background:#fff"></div>
<div class="t " style="left:529.90px;top:96.00px;font-size:17.5px;letter-spacing:0.106px;color:#188038;-webkit-text-stroke:.55px #188038;">New</div>
</div>
<div class="number-submenu" role="menu">
<div class="menu" style="left:596px;top:123px;width:368px;height:790px"></div>
<div class="hl" style="left:596px;top:857px;width:368px;height:40px"></div>
<div class="sep" style="left:642px;top:222px;width:322px"></div>
<div class="sep" style="left:642px;top:363px;width:322px"></div>
<div class="sep" style="left:642px;top:545px;width:322px"></div>
<div class="sep" style="left:642px;top:726px;width:322px"></div>
<div class="t " style="left:645.90px;top:141.00px;font-size:17.5px;letter-spacing:0.469px;color:#2a2c30;">Automatic</div>
<div class="t " style="left:644.50px;top:181.00px;font-size:17.5px;letter-spacing:0.286px;color:#2a2c30;">Plain text</div>
<div class="t " style="left:644.50px;top:242.00px;font-size:17.5px;letter-spacing:0.293px;color:#2a2c30;">Number</div>
<div class="t " style="left:874.69px;top:242.00px;font-size:17.5px;letter-spacing:0.232px;color:#80868b;-webkit-text-stroke:.4px #80868b;">1,000.12</div>
<div class="t " style="left:644.50px;top:282.00px;font-size:17.5px;letter-spacing:0.202px;color:#2a2c30;">Percent</div>
<div class="t " style="left:886.29px;top:282.00px;font-size:17.5px;letter-spacing:-0.297px;color:#80868b;-webkit-text-stroke:.4px #80868b;">10.12%</div>
<div class="t " style="left:645.11px;top:322.00px;font-size:17.5px;letter-spacing:0.481px;color:#2a2c30;">Scientific</div>
<div class="t " style="left:868.89px;top:322.00px;font-size:17.5px;letter-spacing:-0.002px;color:#80868b;-webkit-text-stroke:.4px #80868b;">1.01E+03</div>
<div class="t " style="left:645.90px;top:383.00px;font-size:17.5px;letter-spacing:0.379px;color:#2a2c30;">Accounting</div>
<div class="t " style="left:848.03px;top:383.00px;font-size:17.5px;letter-spacing:0.201px;color:#80868b;-webkit-text-stroke:.4px #80868b;">$ (1,000.12)</div>
<div class="t " style="left:644.50px;top:423.00px;font-size:17.5px;letter-spacing:0.319px;color:#2a2c30;">Financial</div>
<div class="t " style="left:861.45px;top:423.00px;font-size:17.5px;letter-spacing:0.378px;color:#80868b;-webkit-text-stroke:.4px #80868b;">(1,000.12)</div>
<div class="t " style="left:645.02px;top:463.00px;font-size:17.5px;letter-spacing:-0.170px;color:#2a2c30;">Currency</div>
<div class="t " style="left:865.03px;top:463.00px;font-size:17.5px;letter-spacing:0.186px;color:#80868b;-webkit-text-stroke:.4px #80868b;">$1,000.12</div>
<div class="t " style="left:645.02px;top:503.00px;font-size:17.5px;letter-spacing:0.130px;color:#2a2c30;">Currency (rounded)</div>
<div class="t " style="left:890.43px;top:503.00px;font-size:17.5px;letter-spacing:0.047px;color:#80868b;-webkit-text-stroke:.4px #80868b;">$1,000</div>
<div class="t " style="left:644.50px;top:564.00px;font-size:17.5px;letter-spacing:0.092px;color:#2a2c30;">Date</div>
<div class="t " style="left:859.21px;top:564.00px;font-size:17.5px;letter-spacing:0.902px;color:#80868b;-webkit-text-stroke:.4px #80868b;">9/26/2008</div>
<div class="t " style="left:645.55px;top:604.00px;font-size:17.5px;letter-spacing:0.304px;color:#2a2c30;">Time</div>
<div class="t " style="left:851.89px;top:604.00px;font-size:17.5px;letter-spacing:0.400px;color:#80868b;-webkit-text-stroke:.4px #80868b;">3:59:00 PM</div>
<div class="t " style="left:644.50px;top:644.00px;font-size:17.5px;letter-spacing:0.288px;color:#2a2c30;">Date time</div>
<div class="t " style="left:783.71px;top:644.00px;font-size:17.5px;letter-spacing:0.568px;color:#80868b;-webkit-text-stroke:.4px #80868b;">9/26/2008 15:59:00</div>
<div class="t " style="left:644.50px;top:684.00px;font-size:17.5px;letter-spacing:0.343px;color:#2a2c30;">Duration</div>
<div class="t " style="left:873.92px;top:684.00px;font-size:17.5px;letter-spacing:0.316px;color:#80868b;-webkit-text-stroke:.4px #80868b;">24:01:00</div>
<div class="t " style="left:645.20px;top:745.00px;font-size:17.5px;letter-spacing:0.380px;color:#2a2c30;">&quot;+&quot;#&quot;-&quot;###&quot;-&quot;###&quot;-&quot;####</div>
<div class="t " style="left:876.11px;top:745.00px;font-size:17.5px;letter-spacing:0.229px;color:#80868b;-webkit-text-stroke:.4px #80868b;">+---1235</div>
<div class="t " style="left:645.02px;top:785.00px;font-size:17.5px;letter-spacing:-0.625px;color:#2a2c30;">'@</div>
<div class="t " style="left:877.89px;top:785.00px;font-size:17.5px;letter-spacing:0.525px;color:#80868b;-webkit-text-stroke:.4px #80868b;">1234.56</div>
<div class="t " style="left:645.02px;top:825.00px;font-size:17.5px;letter-spacing:0.237px;color:#2a2c30;">'</div>
<div class="t " style="left:941.33px;top:825.00px;font-size:17.5px;letter-spacing:-0.263px;color:#80868b;-webkit-text-stroke:.4px #80868b;">'</div>
<div class="t " style="left:644.50px;top:866.00px;font-size:17.5px;letter-spacing:0.280px;color:#2a2c30;">More Formats</div>
<svg class="ic" style="left:0;top:0;width:1261px;height:895px" viewBox="0 0 1261 895"><path fill="#000" d="M934.80 874.00V882.00L942.80 878.00z"/></svg>
</div>
<div class="more-formats-submenu" role="menu">
<div class="menu" style="left:963.500px;top:760px;width:320px;height:160px"></div>
<div class="hl" style="left:963.500px;top:848px;width:320px;height:40px"></div>
<div class="t " style="left:1011.70px;top:777.00px;font-size:17.5px;letter-spacing:0.288px;color:#2a2c30;">More currencies</div>
<div class="t " style="left:1011.70px;top:817.00px;font-size:17.5px;letter-spacing:0.395px;color:#2a2c30;">More date and time formats</div>
<div class="t " style="left:1012.23px;top:857.00px;font-size:17.5px;letter-spacing:0.355px;color:#2a2c30;">Custom number format</div>
<div class="abs" style="left:969.200px;top:843px;width:270.600px;height:33px;border:10px solid #12cc45;border-radius:24px"></div>
</div>
</body></html>
